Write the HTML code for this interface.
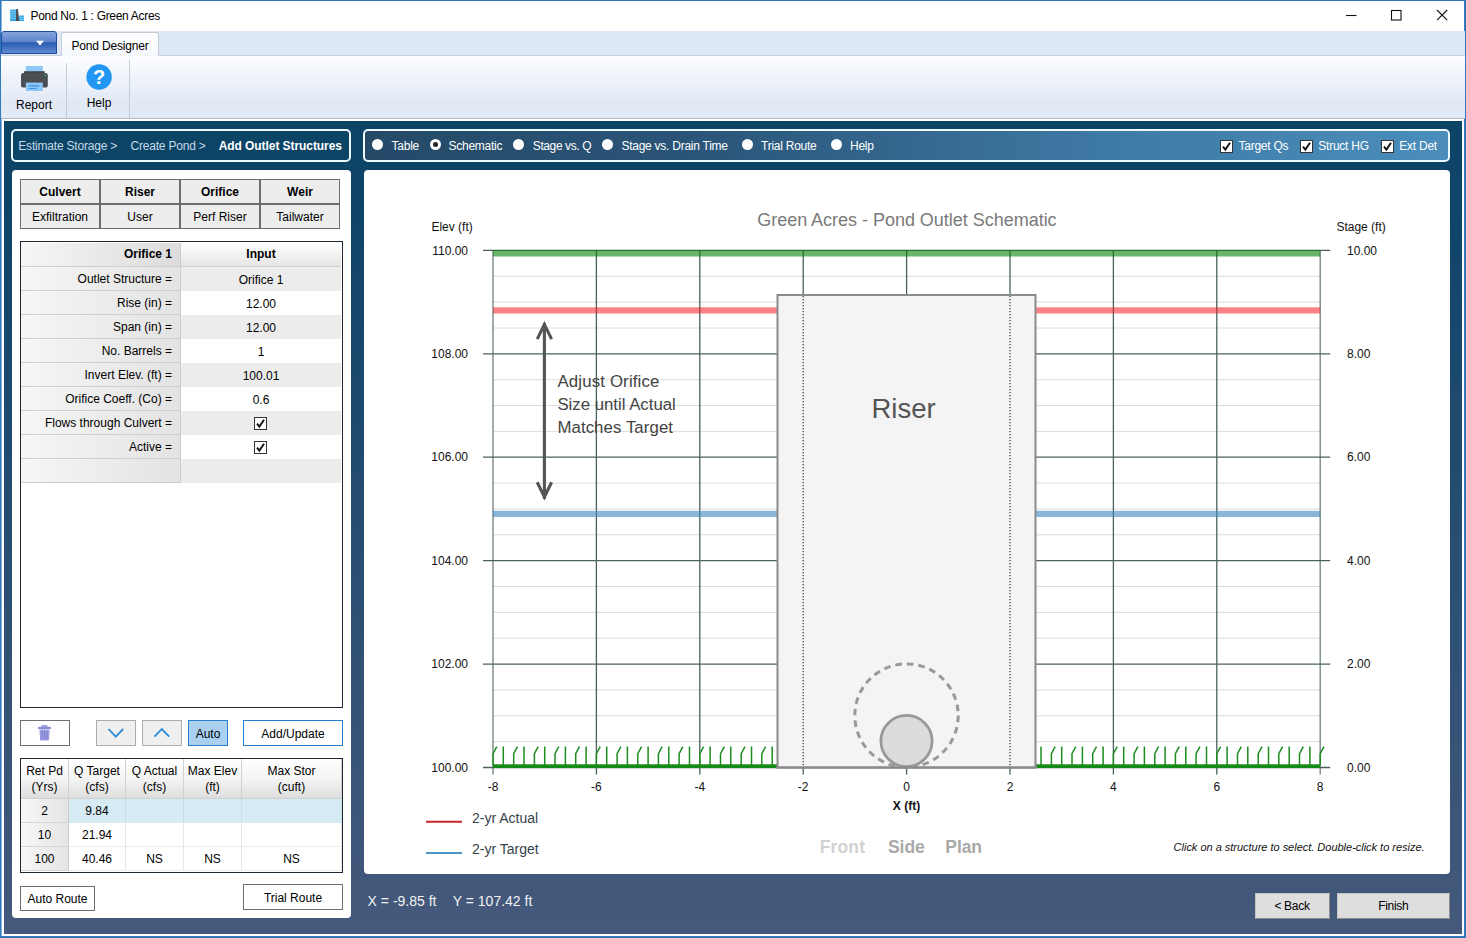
<!DOCTYPE html>
<html lang="en">
<head>
<meta charset="utf-8">
<title>Pond No. 1 : Green Acres</title>
<style>
*{box-sizing:border-box}
html,body{margin:0;padding:0}
body{width:1466px;height:938px;overflow:hidden;position:relative;background:#fff;font:12px "Liberation Sans",sans-serif;color:#000}
.abs{position:absolute}
.win{left:0;top:0;width:1466px;height:938px;border:solid #3079bd;border-width:1px 2px 2px 1px;background:#fff;box-shadow:inset 1px 0 0 rgba(48,121,189,0.55)}
.title{left:30.5px;top:9px;height:14px;line-height:14px;font-size:12px;letter-spacing:-0.3px;white-space:nowrap}
.tabstrip{left:1px;top:31px;width:1464px;height:25px;background:#dee8f5;border-bottom:1px solid #c6d0de}
.appbtn{left:1px;top:31px;width:56px;height:23px;border:1px solid #1d4b9f;border-radius:3px 3px 0 0;background:linear-gradient(#86a3da 0%,#5f86cf 45%,#2a5cb3 52%,#4473c3 75%,#5d8ad2 100%)}
.tab{left:61px;top:32px;width:98px;height:25px;border:1px solid #c3ccd8;border-bottom:none;border-radius:3px 3px 0 0;background:linear-gradient(#ffffff,#f3f7fc);text-align:center;line-height:26px;letter-spacing:-0.18px}
.ribbon{left:1px;top:56px;width:1464px;height:62px;background:linear-gradient(#fcfdfe 0%,#f1f5fb 30%,#e1e9f5 75%,#e2eaf5 100%)}
.ribline{left:1px;top:118px;width:1464px;height:1px;background:#b4b8be}
.rsep{top:60px;width:1px;height:58px;background:#c4ccd7}
.client{left:4px;top:121px;width:1458px;height:813px;background:linear-gradient(#0b4465 0%,#0e4468 10%,#45597c 100%)}
.crumb{left:11px;top:129px;width:340px;height:33px;border:2px solid #eef9ff;border-radius:5px;white-space:nowrap}
.crumb span{position:absolute;top:8px;line-height:14px}
.lpanel{left:12px;top:170px;width:339px;height:748px;background:#fff;border-radius:4px}
.sb{position:absolute;width:80px;height:25px;border:1px solid #6e6e6e;background:#ededed;text-align:center;line-height:25px}
.pbox{left:20px;top:241px;width:323px;height:467px;border:1px solid #1b2733;background:#fff}
.prow{position:absolute;left:0;width:320px;height:24px}
.prow .l{position:absolute;left:0;top:0;width:160px;height:24px;background:linear-gradient(90deg,#f6f6f6,#e3e3e3);border-bottom:1px solid #cfcfcf;border-right:1px solid #cdcdcd;text-align:right;padding-right:8px;line-height:24px;white-space:nowrap}
.prow .r{position:absolute;left:160px;top:0;width:160px;height:24px;text-align:center;line-height:27px}
.g{background:#ececec}
.cb{position:absolute;width:13px;height:13px;border:1px solid #333;background:#fff}
.btn{position:absolute;border:1px solid #707070;background:#fff;text-align:center;white-space:nowrap}
.rtab{left:20px;top:758px;width:323px;height:115px;border:1px solid #1b2733;background:#fff}
.rtab div{position:absolute;text-align:center}
.hd{background:linear-gradient(#ffffff 0%,#f4f4f4 50%,#dedede 100%);border-right:1px solid #d0d0d0;border-bottom:1px solid #cfcfcf;line-height:16px;padding-top:4px;height:40px;top:0}
.rh{background:linear-gradient(90deg,#f7f7f7,#e4e4e4);border-right:1px solid #cdcdcd;border-bottom:1px solid #d6d6d6;left:0;width:48px;height:24px;line-height:25px}
.c{height:24px;line-height:25px;border-right:1px solid #e6e6e6;border-bottom:1px solid #ececec}
.sel{background:#d6ebf3;border-right-color:#c6e0ea;border-bottom-color:#d6ebf3}
.rbar{left:363px;top:129px;width:1087px;height:33px;border:2px solid #eef9ff;border-radius:5px;background:linear-gradient(90deg,#254a68 0%,#2a5478 30%,#3f7ba6 70%,#4a8dbb 100%);color:#fff;white-space:nowrap}
.rbar span{position:absolute;top:8px;line-height:14px;letter-spacing:-0.25px}
.rd{position:absolute;top:7.5px;width:11px;height:11px;border-radius:50%;background:#fff}
.rd.on:after{content:"";position:absolute;left:3px;top:3px;width:5px;height:5px;border-radius:50%;background:#222}
.ck{position:absolute;top:8.5px;width:13px;height:13px;background:#fff;border:1px solid #333}
.cpanel{left:364px;top:170px;width:1086px;height:704px;background:#fff;border-radius:4px}
.gbtn{position:absolute;top:893px;height:26px;background:#dedede;border:1px solid #c4c4c4;border-right-color:#8c8c8c;border-bottom-color:#8c8c8c;text-align:center;line-height:24px;letter-spacing:-0.3px}
</style>
</head>
<body>
<div class="abs win"></div>

<!-- title bar -->
<svg class="abs" style="left:9px;top:8px" width="17" height="14" viewBox="0 0 17 14">
  <path d="M1.2 1.5h6.2v11.6H1.2z" fill="#35a4de"/>
  <path d="M1.2 3.4h6M1.2 5.7h6M1.2 8h6M1.2 10.3h6" stroke="#7fd0f6" stroke-width="1"/>
  <path d="M7 1h1.9l1.5 12H7z" fill="#4a4f55"/>
  <path d="M10.2 7.6H15v5.5h-5z" fill="#35a4de"/>
  <path d="M10.4 9.3H15M10.4 11.4H15" stroke="#7fd0f6" stroke-width="1"/>
</svg>
<div class="abs title">Pond No. 1 : Green Acres</div>
<svg class="abs" style="left:1340px;top:5px" width="115" height="22" viewBox="1340 5 115 22">
  <path d="M1346 15.5h10.5" stroke="#111" stroke-width="1.1"/>
  <rect x="1391.5" y="10.5" width="9.5" height="9.5" fill="none" stroke="#111" stroke-width="1.1"/>
  <path d="M1437 10l10.2 10.2M1447.2 10L1437 20.2" stroke="#111" stroke-width="1.1"/>
</svg>

<!-- tab strip -->
<div class="abs tabstrip"></div>
<div class="abs appbtn"></div>
<svg class="abs" style="left:35px;top:40px" width="10" height="6" viewBox="0 0 10 6"><path d="M1 0.8h8L5 5.4z" fill="#fff"/></svg>
<div class="abs tab">Pond Designer</div>

<!-- ribbon -->
<div class="abs ribbon"></div>
<div class="abs ribline"></div>
<div class="abs rsep" style="left:66px;top:63px;height:55px"></div>
<div class="abs rsep" style="left:129px"></div>
<svg class="abs" style="left:19px;top:64px" width="31" height="29" viewBox="19 64 31 29">
  <rect x="25.8" y="66" width="17" height="7" fill="#8fc8f8"/>
  <path d="M24 71.2h20.7v2.6H24z" fill="#43484d"/>
  <rect x="21" y="73" width="26.8" height="14.6" rx="2.2" fill="#4a4f54"/>
  <rect x="25.8" y="82.6" width="17" height="8.4" fill="#8fc8f8"/>
  <path d="M28.6 85.9h10.6M28.6 88.5h8" stroke="#3b8fe0" stroke-width="1.1"/>
  <rect x="44.4" y="74.6" width="1.6" height="1.6" fill="#31b05a"/>
</svg>
<div class="abs" style="left:8px;top:98px;width:52px;text-align:center;line-height:14px">Report</div>
<svg class="abs" style="left:85px;top:63px" width="28" height="28" viewBox="85 63 28 28">
  <circle cx="99.1" cy="77" r="12.7" fill="#2196f3"/>
  <text x="99" y="84.2" font-family="Liberation Sans, sans-serif" font-size="20" font-weight="bold" fill="#fff" text-anchor="middle">?</text>
</svg>
<div class="abs" style="left:74px;top:95.5px;width:50px;text-align:center;line-height:14px">Help</div>

<!-- client -->
<div class="abs client"></div>

<!-- breadcrumb -->
<div class="abs crumb">
  <span style="left:5.3px;color:#c5d9e8;letter-spacing:-0.2px">Estimate Storage &gt;</span>
  <span style="left:117.5px;color:#c5d9e8;letter-spacing:-0.2px">Create Pond &gt;</span>
  <span style="left:205.7px;color:#fff;font-weight:bold;letter-spacing:-0.07px">Add Outlet Structures</span>
</div>

<!-- left panel -->
<div class="abs lpanel"></div>
<div class="sb" style="left:20px;top:179px;font-weight:bold">Culvert</div>
<div class="sb" style="left:100px;top:179px;font-weight:bold">Riser</div>
<div class="sb" style="left:180px;top:179px;font-weight:bold">Orifice</div>
<div class="sb" style="left:260px;top:179px;font-weight:bold">Weir</div>
<div class="sb" style="left:20px;top:204px">Exfiltration</div>
<div class="sb" style="left:100px;top:204px">User</div>
<div class="sb" style="left:180px;top:204px">Perf Riser</div>
<div class="sb" style="left:260px;top:204px">Tailwater</div>

<div class="abs pbox">
  <div class="prow" style="top:0.5px"><div class="l" style="font-weight:bold;line-height:22px;background:linear-gradient(90deg,#f6f6f6,#dcdcdc)">Orifice 1</div><div class="r" style="font-weight:bold;line-height:23px;background:linear-gradient(#fdfdfd,#e6e6e6);border-bottom:1px solid #cfcfcf">Input</div></div>
  <div class="prow" style="top:24.5px"><div class="l">Outlet Structure =</div><div class="r g">Orifice 1</div></div>
  <div class="prow" style="top:48.5px"><div class="l">Rise (in) =</div><div class="r">12.00</div></div>
  <div class="prow" style="top:72.5px"><div class="l">Span (in) =</div><div class="r g">12.00</div></div>
  <div class="prow" style="top:96.5px"><div class="l">No. Barrels =</div><div class="r">1</div></div>
  <div class="prow" style="top:120.5px"><div class="l">Invert Elev. (ft) =</div><div class="r g">100.01</div></div>
  <div class="prow" style="top:144.5px"><div class="l">Orifice Coeff. (Co) =</div><div class="r">0.6</div></div>
  <div class="prow" style="top:168.5px"><div class="l">Flows through Culvert =</div><div class="r g"></div></div>
  <div class="prow" style="top:192.5px"><div class="l">Active =</div><div class="r"></div></div>
  <div class="prow" style="top:216.5px"><div class="l"></div><div class="r g"></div></div>
  <div class="cb" style="left:233px;top:174.5px"><svg width="11" height="11" viewBox="0 0 11 11" style="display:block"><path d="M2 5.6l2.4 3L9 1.8" fill="none" stroke="#111" stroke-width="1.9"/></svg></div>
  <div class="cb" style="left:233px;top:198.5px"><svg width="11" height="11" viewBox="0 0 11 11" style="display:block"><path d="M2 5.6l2.4 3L9 1.8" fill="none" stroke="#111" stroke-width="1.9"/></svg></div>
</div>

<!-- buttons row -->
<div class="btn" style="left:20px;top:720px;width:50px;height:26px"></div>
<svg class="abs" style="left:36px;top:724px" width="17" height="18" viewBox="0 0 17 18">
  <path d="M5.5 1.2h6v1.6h-6z" fill="#8f8fd6"/>
  <path d="M2.2 2.8h12.6v2.2H2.2z" fill="#8888d4"/>
  <path d="M3.4 5.6h10.2l-0.7 11H4.1z" fill="#9c9ce0"/>
  <path d="M6 7v8M8.5 7v8M11 7v8" stroke="#7d7dcc" stroke-width="1"/>
</svg>
<div class="btn" style="left:96px;top:720px;width:40px;height:26px;background:#efefef;border-color:#adadad"></div>
<svg class="abs" style="left:106px;top:725px" width="20" height="16" viewBox="0 0 20 16"><path d="M2.5 4l7.3 7.6L17.2 4" fill="none" stroke="#2b8ad9" stroke-width="1.8"/></svg>
<div class="btn" style="left:142px;top:720px;width:40px;height:26px;background:#efefef;border-color:#adadad"></div>
<svg class="abs" style="left:152px;top:725px" width="20" height="16" viewBox="0 0 20 16"><path d="M2.5 11.6l7.3-7.6 7.4 7.6" fill="none" stroke="#2b8ad9" stroke-width="1.8"/></svg>
<div class="btn" style="left:188px;top:720px;width:40px;height:26px;background:#a9d1ef;border-color:#2a7fcb;line-height:26px">Auto</div>
<div class="btn" style="left:243px;top:720px;width:100px;height:26px;border-color:#2a7fcb;line-height:26px">Add/Update</div>

<!-- results table -->
<div class="abs rtab">
  <div class="hd" style="left:0;width:48px">Ret Pd<br>(Yrs)</div>
  <div class="hd" style="left:48px;width:57px">Q Target<br>(cfs)</div>
  <div class="hd" style="left:105px;width:58px">Q Actual<br>(cfs)</div>
  <div class="hd" style="left:163px;width:58px">Max Elev<br>(ft)</div>
  <div class="hd" style="left:221px;width:100px">Max Stor<br>(cuft)</div>

  <div class="rh" style="top:40px">2</div>
  <div class="c sel" style="top:40px;left:48px;width:57px">9.84</div>
  <div class="c sel" style="top:40px;left:105px;width:58px"></div>
  <div class="c sel" style="top:40px;left:163px;width:58px"></div>
  <div class="c sel" style="top:40px;left:221px;width:100px"></div>

  <div class="rh" style="top:64px">10</div>
  <div class="c" style="top:64px;left:48px;width:57px">21.94</div>
  <div class="c" style="top:64px;left:105px;width:58px"></div>
  <div class="c" style="top:64px;left:163px;width:58px"></div>
  <div class="c" style="top:64px;left:221px;width:100px"></div>

  <div class="rh" style="top:88px">100</div>
  <div class="c" style="top:88px;left:48px;width:57px">40.46</div>
  <div class="c" style="top:88px;left:105px;width:58px">NS</div>
  <div class="c" style="top:88px;left:163px;width:58px">NS</div>
  <div class="c" style="top:88px;left:221px;width:100px">NS</div>
</div>

<div class="btn" style="left:20px;top:886px;width:75px;height:25px;line-height:24px">Auto Route</div>
<div class="btn" style="left:243px;top:884px;width:100px;height:26px;line-height:26px">Trial Route</div>

<!-- radio bar -->
<div class="abs rbar">
  <i class="rd" style="left:7.4px"></i><span style="left:26.6px">Table</span>
  <i class="rd on" style="left:65.2px"></i><span style="left:83.5px">Schematic</span>
  <i class="rd" style="left:148.4px"></i><span style="left:167.8px;letter-spacing:-0.4px">Stage vs. Q</span>
  <i class="rd" style="left:237.4px"></i><span style="left:256.4px">Stage vs. Drain Time</span>
  <i class="rd" style="left:377.1px"></i><span style="left:396px">Trial Route</span>
  <i class="rd" style="left:466.1px"></i><span style="left:485px">Help</span>
  <i class="ck" style="left:854.5px"><svg width="11" height="11" viewBox="0 0 11 11" style="display:block"><path d="M2 5.6l2.4 3L9 1.8" fill="none" stroke="#111" stroke-width="1.9"/></svg></i><span style="left:873.5px">Target Qs</span>
  <i class="ck" style="left:934.5px"><svg width="11" height="11" viewBox="0 0 11 11" style="display:block"><path d="M2 5.6l2.4 3L9 1.8" fill="none" stroke="#111" stroke-width="1.9"/></svg></i><span style="left:953.3px">Struct HG</span>
  <i class="ck" style="left:1015.5px"><svg width="11" height="11" viewBox="0 0 11 11" style="display:block"><path d="M2 5.6l2.4 3L9 1.8" fill="none" stroke="#111" stroke-width="1.9"/></svg></i><span style="left:1034.3px">Ext Det</span>
</div>

<!-- chart -->
<div class="abs cpanel"></div>
<svg class="abs" style="left:364px;top:170px" width="1086" height="704" viewBox="364 170 1086 704" font-family="Liberation Sans, sans-serif">
<line x1="493.0" x2="1320.2" y1="741.6" y2="741.6" stroke="#dcdcdc" stroke-width="1"/>
<line x1="493.0" x2="1320.2" y1="715.8" y2="715.8" stroke="#dcdcdc" stroke-width="1"/>
<line x1="493.0" x2="1320.2" y1="689.9" y2="689.9" stroke="#dcdcdc" stroke-width="1"/>
<line x1="493.0" x2="1320.2" y1="638.2" y2="638.2" stroke="#dcdcdc" stroke-width="1"/>
<line x1="493.0" x2="1320.2" y1="612.4" y2="612.4" stroke="#dcdcdc" stroke-width="1"/>
<line x1="493.0" x2="1320.2" y1="586.5" y2="586.5" stroke="#dcdcdc" stroke-width="1"/>
<line x1="493.0" x2="1320.2" y1="534.8" y2="534.8" stroke="#dcdcdc" stroke-width="1"/>
<line x1="493.0" x2="1320.2" y1="509.0" y2="509.0" stroke="#dcdcdc" stroke-width="1"/>
<line x1="493.0" x2="1320.2" y1="483.1" y2="483.1" stroke="#dcdcdc" stroke-width="1"/>
<line x1="493.0" x2="1320.2" y1="431.4" y2="431.4" stroke="#dcdcdc" stroke-width="1"/>
<line x1="493.0" x2="1320.2" y1="405.5" y2="405.5" stroke="#dcdcdc" stroke-width="1"/>
<line x1="493.0" x2="1320.2" y1="379.7" y2="379.7" stroke="#dcdcdc" stroke-width="1"/>
<line x1="493.0" x2="1320.2" y1="328.0" y2="328.0" stroke="#dcdcdc" stroke-width="1"/>
<line x1="493.0" x2="1320.2" y1="302.1" y2="302.1" stroke="#dcdcdc" stroke-width="1"/>
<line x1="493.0" x2="1320.2" y1="276.3" y2="276.3" stroke="#dcdcdc" stroke-width="1"/>
<line x1="483.0" x2="1330.2" y1="767.5" y2="767.5" stroke="#4b625c" stroke-width="1.3"/>
<line x1="483.0" x2="1330.2" y1="664.1" y2="664.1" stroke="#4b625c" stroke-width="1.3"/>
<line x1="483.0" x2="1330.2" y1="560.7" y2="560.7" stroke="#4b625c" stroke-width="1.3"/>
<line x1="483.0" x2="1330.2" y1="457.2" y2="457.2" stroke="#4b625c" stroke-width="1.3"/>
<line x1="483.0" x2="1330.2" y1="353.8" y2="353.8" stroke="#4b625c" stroke-width="1.3"/>
<line x1="483.0" x2="1330.2" y1="250.4" y2="250.4" stroke="#4b625c" stroke-width="1.3"/>
<line x1="493.0" x2="493.0" y1="250.4" y2="774.5" stroke="#4b625c" stroke-width="1.3" stroke-opacity="0.8"/>
<line x1="596.4" x2="596.4" y1="250.4" y2="774.5" stroke="#4b625c" stroke-width="1.3"/>
<line x1="699.8" x2="699.8" y1="250.4" y2="774.5" stroke="#4b625c" stroke-width="1.3"/>
<line x1="803.2" x2="803.2" y1="250.4" y2="774.5" stroke="#4b625c" stroke-width="1.3"/>
<line x1="906.6" x2="906.6" y1="250.4" y2="774.5" stroke="#4b625c" stroke-width="1.3"/>
<line x1="1010.0" x2="1010.0" y1="250.4" y2="774.5" stroke="#4b625c" stroke-width="1.3"/>
<line x1="1113.4" x2="1113.4" y1="250.4" y2="774.5" stroke="#4b625c" stroke-width="1.3"/>
<line x1="1216.8" x2="1216.8" y1="250.4" y2="774.5" stroke="#4b625c" stroke-width="1.3"/>
<line x1="1320.2" x2="1320.2" y1="250.4" y2="774.5" stroke="#4b625c" stroke-width="1.3" stroke-opacity="0.8"/>
<rect x="493.0" y="250" width="827.2" height="6.5" fill="rgb(0,128,0)" fill-opacity="0.59"/>
<rect x="493.0" y="307.3" width="827.2" height="6.2" fill="rgb(245,25,35)" fill-opacity="0.55"/>
<rect x="493.0" y="510.8" width="827.2" height="6.2" fill="rgb(60,135,190)" fill-opacity="0.6"/>
<path d="M493.0 765V753.6L496.8 746.6 M503.3 765V746.6 M513.7 765V753.6L517.5 746.6 M524.0 765V746.6 M534.4 765V753.6L538.2 746.6 M544.7 765V746.6 M555.0 765V753.6L558.8 746.6 M565.4 765V746.6 M575.7 765V753.6L579.5 746.6 M586.1 765V746.6 M596.4 765V753.6L600.2 746.6 M606.7 765V746.6 M617.1 765V753.6L620.9 746.6 M627.4 765V746.6 M637.8 765V753.6L641.6 746.6 M648.1 765V746.6 M658.4 765V753.6L662.2 746.6 M668.8 765V746.6 M679.1 765V753.6L682.9 746.6 M689.5 765V746.6 M699.8 765V753.6L703.6 746.6 M710.1 765V746.6 M720.5 765V753.6L724.3 746.6 M730.8 765V746.6 M741.2 765V753.6L745.0 746.6 M751.5 765V746.6 M761.8 765V753.6L765.6 746.6 M772.2 765V746.6 M1041.0 765V746.6 M1051.4 765V753.6L1055.2 746.6 M1061.7 765V746.6 M1072.0 765V753.6L1075.8 746.6 M1082.4 765V746.6 M1092.7 765V753.6L1096.5 746.6 M1103.1 765V746.6 M1113.4 765V753.6L1117.2 746.6 M1123.7 765V746.6 M1134.1 765V753.6L1137.9 746.6 M1144.4 765V746.6 M1154.8 765V753.6L1158.6 746.6 M1165.1 765V746.6 M1175.4 765V753.6L1179.2 746.6 M1185.8 765V746.6 M1196.1 765V753.6L1199.9 746.6 M1206.5 765V746.6 M1216.8 765V753.6L1220.6 746.6 M1227.1 765V746.6 M1237.5 765V753.6L1241.3 746.6 M1247.8 765V746.6 M1258.2 765V753.6L1262.0 746.6 M1268.5 765V746.6 M1278.8 765V753.6L1282.6 746.6 M1289.2 765V746.6 M1299.5 765V753.6L1303.3 746.6 M1309.9 765V746.6 M1320.2 765V753.6L1324.0 746.6" fill="none" stroke="#1e8c1e" stroke-width="1.5"/>
<rect x="493.0" y="764.3" width="827.2" height="3.7" fill="#168a16"/>
<rect x="777.5" y="295" width="258" height="472.5" fill="#f4f4f4" stroke="#8a8a8a" stroke-width="2"/>
<line x1="803.2" x2="803.2" y1="296" y2="766" stroke="#333" stroke-width="1.2" stroke-dasharray="1.3 1.7"/>
<line x1="1010.0" x2="1010.0" y1="296" y2="766" stroke="#333" stroke-width="1.2" stroke-dasharray="1.3 1.7"/>
<circle cx="906.5" cy="715.6" r="51.7" fill="none" stroke="#999" stroke-width="3" stroke-dasharray="6.6 5"/>
<circle cx="906.5" cy="741" r="25.6" fill="#dcdcdc" stroke="#999" stroke-width="2.8"/>
<line x1="776.5" x2="1036.5" y1="767.5" y2="767.5" stroke="#8a8a8a" stroke-width="2"/>
<path d="M544.4 323V499 M537.2 339.1L544.4 324.4L551.6 339.1 M537.2 482.3L544.4 497L551.6 482.3" fill="none" stroke="#555" stroke-width="3.1" stroke-linejoin="miter" stroke-miterlimit="10"/>
<text x="557.4" y="386.7" font-size="16.8" fill="#444" textLength="102">Adjust Orifice</text>
<text x="557.4" y="409.7" font-size="16.8" fill="#444" textLength="118.4">Size until Actual</text>
<text x="557.4" y="432.7" font-size="16.8" fill="#444" textLength="115.6">Matches Target</text>
<text x="903.5" y="418" font-size="27.5" fill="#555" text-anchor="middle">Riser</text>
<text x="906.9" y="226.3" font-size="18" fill="#7a7a7a" text-anchor="middle" textLength="299.4">Green Acres - Pond Outlet Schematic</text>
<text x="431.4" y="231" font-size="12" fill="#111">Elev (ft)</text>
<text x="1336.4" y="231" font-size="12" fill="#111">Stage (ft)</text>
<text x="468" y="771.6" font-size="12" fill="#111" text-anchor="end">100.00</text>
<text x="1347" y="771.6" font-size="12" fill="#111">0.00</text>
<text x="468" y="668.2" font-size="12" fill="#111" text-anchor="end">102.00</text>
<text x="1347" y="668.2" font-size="12" fill="#111">2.00</text>
<text x="468" y="564.8" font-size="12" fill="#111" text-anchor="end">104.00</text>
<text x="1347" y="564.8" font-size="12" fill="#111">4.00</text>
<text x="468" y="461.3" font-size="12" fill="#111" text-anchor="end">106.00</text>
<text x="1347" y="461.3" font-size="12" fill="#111">6.00</text>
<text x="468" y="357.9" font-size="12" fill="#111" text-anchor="end">108.00</text>
<text x="1347" y="357.9" font-size="12" fill="#111">8.00</text>
<text x="468" y="254.5" font-size="12" fill="#111" text-anchor="end">110.00</text>
<text x="1347" y="254.5" font-size="12" fill="#111">10.00</text>
<text x="493.0" y="791.3" font-size="12" fill="#111" text-anchor="middle">-8</text>
<text x="596.4" y="791.3" font-size="12" fill="#111" text-anchor="middle">-6</text>
<text x="699.8" y="791.3" font-size="12" fill="#111" text-anchor="middle">-4</text>
<text x="803.2" y="791.3" font-size="12" fill="#111" text-anchor="middle">-2</text>
<text x="906.6" y="791.3" font-size="12" fill="#111" text-anchor="middle">0</text>
<text x="1010.0" y="791.3" font-size="12" fill="#111" text-anchor="middle">2</text>
<text x="1113.4" y="791.3" font-size="12" fill="#111" text-anchor="middle">4</text>
<text x="1216.8" y="791.3" font-size="12" fill="#111" text-anchor="middle">6</text>
<text x="1320.2" y="791.3" font-size="12" fill="#111" text-anchor="middle">8</text>
<text x="906.5" y="810" font-size="12" font-weight="bold" fill="#111" text-anchor="middle">X (ft)</text>
<line x1="426" x2="462" y1="821.7" y2="821.7" stroke="#c8232c" stroke-width="2"/>
<line x1="426" x2="462" y1="853" y2="853" stroke="#4a96c8" stroke-width="2"/>
<text x="472" y="823" font-size="14" fill="#37434b">2-yr Actual</text>
<text x="472" y="853.8" font-size="14" fill="#37434b">2-yr Target</text>
<text x="819.8" y="853.1" font-size="17.5" font-weight="bold" fill="#d2d2d2" textLength="45.2">Front</text>
<text x="888" y="853.1" font-size="17.5" font-weight="bold" fill="#a9a9a9" textLength="36.8">Side</text>
<text x="945.3" y="853.1" font-size="17.5" font-weight="bold" fill="#a9a9a9" textLength="36.7">Plan</text>
<text x="1173.6" y="850.9" font-size="11" font-style="italic" fill="#111" textLength="251">Click on a structure to select. Double-click to resize.</text>
</svg>

<!-- status -->
<div class="abs" style="left:367.6px;top:893px;font-size:14px;line-height:16px;color:#f2f2f2;white-space:pre">X = -9.85 ft</div>
<div class="abs" style="left:452.8px;top:893px;font-size:14px;line-height:16px;color:#f2f2f2;white-space:pre">Y = 107.42 ft</div>
<div class="gbtn" style="left:1254.5px;width:75px">&lt; Back</div>
<div class="gbtn" style="left:1336.5px;width:113.5px">Finish</div>
</body>
</html>
